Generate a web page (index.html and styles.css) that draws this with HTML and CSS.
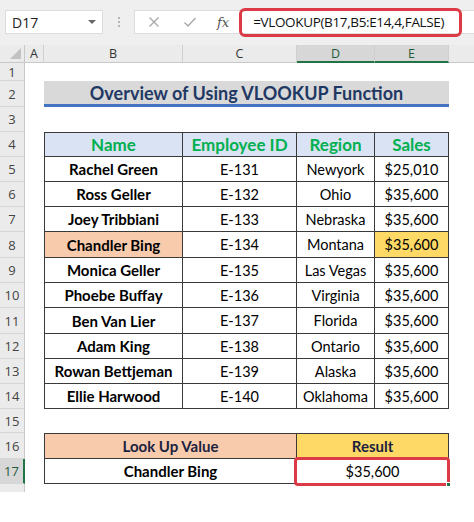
FILE: index.html
```html
<!DOCTYPE html>
<html>
<head>
<meta charset="utf-8">
<link rel="stylesheet" href="styles.css">
</head>
<body>
<div class="topbar">
  <div class="namebox"><span class="ref">D17</span><span class="dd"></span></div>
  <div class="sep"><i></i><i></i><i></i></div>
  <div class="fbox">
    <svg class="ico x" width="12" height="12" viewBox="0 0 12 12"><path d="M1.5 1.5L10.5 10.5M10.5 1.5L1.5 10.5" stroke="#a8a8a8" stroke-width="1.3" fill="none"/></svg>
    <svg class="ico ok" width="14" height="12" viewBox="0 0 14 12"><path d="M1.5 6.5L5 10L12.5 2" stroke="#a8a8a8" stroke-width="1.4" fill="none"/></svg>
    <span class="fx">fx</span>
    <div class="formula">=VLOOKUP(B17,B5:E14,4,FALSE)</div>
  </div>
</div>
<div class="sheet">
  <div class="corner"><span class="tri"></span></div>
  <div class="ch">A</div>
  <div class="ch">B</div>
  <div class="ch">C</div>
  <div class="ch sel">D</div>
  <div class="ch sel">E</div>
  <div class="ch last"></div>

  <div class="rh">1</div><div class="blank"></div>
  <div class="rh">2</div><div class="title">Overview of Using VLOOKUP Function</div>
  <div class="rh">3</div><div class="blank"></div>

  <div class="rh">4</div>
  <div class="c hd first top">Name</div><div class="c hd top">Employee ID</div><div class="c hd top">Region</div><div class="c hd top">Sales</div>

  <div class="rh">5</div>
  <div class="c nm first">Rachel Green</div><div class="c">E-131</div><div class="c">Newyork</div><div class="c">$25,010</div>
  <div class="rh">6</div>
  <div class="c nm first">Ross Geller</div><div class="c">E-132</div><div class="c">Ohio</div><div class="c">$35,600</div>
  <div class="rh">7</div>
  <div class="c nm first">Joey Tribbiani</div><div class="c">E-133</div><div class="c">Nebraska</div><div class="c">$35,600</div>
  <div class="rh">8</div>
  <div class="c nm first peach">Chandler Bing</div><div class="c">E-134</div><div class="c">Montana</div><div class="c gold">$35,600</div>
  <div class="rh">9</div>
  <div class="c nm first">Monica Geller</div><div class="c">E-135</div><div class="c">Las Vegas</div><div class="c">$35,600</div>
  <div class="rh">10</div>
  <div class="c nm first">Phoebe Buffay</div><div class="c">E-136</div><div class="c">Virginia</div><div class="c">$35,600</div>
  <div class="rh">11</div>
  <div class="c nm first">Ben Van Lier</div><div class="c">E-137</div><div class="c">Florida</div><div class="c">$35,600</div>
  <div class="rh">12</div>
  <div class="c nm first">Adam King</div><div class="c">E-138</div><div class="c">Ontario</div><div class="c">$35,600</div>
  <div class="rh">13</div>
  <div class="c nm first">Rowan Bettjeman</div><div class="c">E-139</div><div class="c">Alaska</div><div class="c">$35,600</div>
  <div class="rh">14</div>
  <div class="c nm first">Ellie Harwood</div><div class="c">E-140</div><div class="c">Oklahoma</div><div class="c">$35,600</div>

  <div class="rh">15</div><div class="blank"></div>

  <div class="rh">16</div>
  <div class="c lk first top peach wide">Look Up Value</div><div class="c lk top gold wide">Result</div>
  <div class="rh selr">17</div>
  <div class="c nm first wide">Chandler Bing</div><div class="c wide result">$35,600<span class="hl"></span><span class="handle"></span></div>

  <div class="rh tail"></div>
</div>
</body>
</html>
```
FILE: styles.css
```css
* { box-sizing: border-box; }
html, body { margin: 0; padding: 0; background: #ffffff; }
body { width: 474px; height: 522px; overflow: hidden; font-family: "Lato", "Noto Sans", sans-serif; color: #000; }

.topbar {
  height: 45px;
  background: #efefef;
  display: flex;
  align-items: flex-start;
  padding: 10px 0 0 5px;
}
.namebox {
  width: 98px; height: 24px;
  background: #fff;
  border: 1px solid #dcdcdc;
  display: flex; align-items: center; justify-content: space-between;
  padding: 0 6px 0 6px;
}
.ref { font-size: 14px; color: #222; font-family: "Open Sans", sans-serif; }
.dd { width: 0; height: 0; border-left: 4px solid transparent; border-right: 4px solid transparent; border-top: 4px solid #666; }
.sep { width: 31px; height: 24px; display: flex; flex-direction: column; align-items: center; justify-content: center; gap: 2px; }
.sep i { width: 2px; height: 2px; background: #b5b5b5; display: block; }
.fbox {
  flex: 1; height: 24px;
  background: #fff;
  border: 1px solid #dcdcdc; border-right: 0;
  display: flex; align-items: center;
  padding-left: 13px;
}
.ico.x { margin-right: 23px; }
.ico.ok { margin-right: 20px; }
.fx { font-family: "DejaVu Serif", "Liberation Serif", serif; font-style: italic; font-size: 13px; color: #555; margin-right: 10px; }
.formula {
  margin-top: -4px; margin-bottom: -4px;
  width: 223px; height: 29px;
  border: 3px solid #dc3b45;
  border-radius: 6px;
  font-family: "Open Sans", sans-serif;
  font-size: 13.5px; color: #111;
  display: flex; align-items: center;
  padding-left: 11px;
  letter-spacing: -0.35px;
}

.sheet {
  display: grid;
  grid-template-columns: 25px 19px 139px 114px 78px 74px 25px;
  grid-template-rows: 18px 18px 26px 25px 25px 25px 25px 25px 26px 25px 25px 26px 25px 25px 25px 24px 26px 25px 8px;
}
.corner { background: #ebebeb; border-right: 1px solid #c8c8c8; border-bottom: 1px solid #c8c8c8; position: relative; }
.tri { position: absolute; right: 3px; bottom: 3px; width: 0; height: 0; border-left: 11px solid transparent; border-bottom: 11px solid #c2c2c2; }
.ch {
  background: #ebebeb;
  border-right: 1px solid #cfcfcf;
  border-bottom: 1px solid #c8c8c8;
  font-family: "Open Sans", sans-serif; font-size: 12.5px; color: #333;
  display: flex; align-items: center; justify-content: center;
}
.ch.sel { background: #d7d7d7; border-bottom: 2px solid #217346; color: #1e5c3a; }
.ch.last { border-right: 0; }
.rh {
  grid-column: 1;
  background: #ebebeb;
  border-right: 1px solid #c8c8c8;
  border-bottom: 1px solid #d6d6d6;
  font-family: "Open Sans", sans-serif; font-size: 13px; color: #444;
  display: flex; align-items: center; justify-content: center;
}
.rh.selr { background: #d7d7d7; border-right: 2px solid #217346; color: #1e5c3a; }
.rh.tail { border-bottom: 0; }
.blank { grid-column: 2 / 8; }

.title {
  grid-column: 3 / 7;
  background: #d9d9d9;
  border-bottom: 3px solid #4472c4;
  color: #1f3864;
  font-weight: 700; font-size: 18px;
  display: flex; align-items: center; justify-content: center;
  padding-top: 1px;
}

.c {
  border-right: 1px solid #3a3a3a;
  border-bottom: 1px solid #3a3a3a;
  font-size: 14.5px;
  display: flex; align-items: center; justify-content: center;
  background: #fff;
}
.c.first { grid-column: 3; border-left: 1px solid #3a3a3a; }
.c.top { border-top: 1px solid #3a3a3a; }
.c.hd { background: #dae3f3; color: #00b050; font-weight: 700; font-size: 17px; }
.c.nm { font-weight: 700; font-size: 15px; }
.c.lk { font-weight: 700; color: #1b2240; font-size: 15px; }
.peach { background: #f8cbad !important; }
.gold { background: #ffd966 !important; }
.c.wide { grid-column: span 2; }
.c.first.wide { grid-column: 3 / 5; }
.result { position: relative; }
.hl {
  position: absolute; left: -3px; top: -2px; right: -2px; bottom: -3px;
  border: 3px solid #dc3b45; border-radius: 4px;
}
.handle { position: absolute; right: -3px; bottom: -4px; width: 5px; height: 5px; background: #217346; border: 1px solid #fff; }
```
